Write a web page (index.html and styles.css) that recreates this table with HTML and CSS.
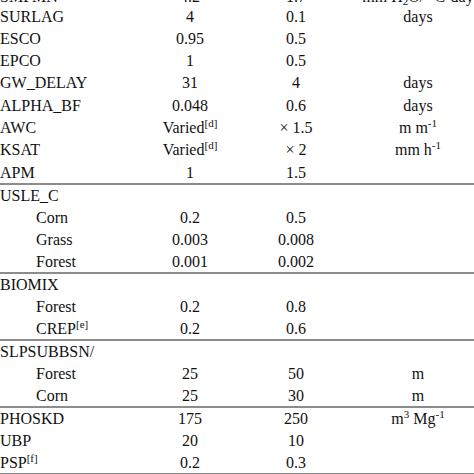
FILE: index.html
```html
<!DOCTYPE html>
<html>
<head>
<meta charset="utf-8">
<link rel="stylesheet" href="styles.css">
</head>
<body>
<div class="table">
  <div class="section first">
    <div class="row cut"><span class="c1">SMFMN</span><span class="c2">4.2</span><span class="c3">1.7</span><span class="c4">mm H<sub>2</sub>O/ °C-day</span></div>
    <div class="row"><span class="c1">SURLAG</span><span class="c2">4</span><span class="c3">0.1</span><span class="c4">days</span></div>
    <div class="row"><span class="c1">ESCO</span><span class="c2">0.95</span><span class="c3">0.5</span><span class="c4"></span></div>
    <div class="row"><span class="c1">EPCO</span><span class="c2">1</span><span class="c3">0.5</span><span class="c4"></span></div>
    <div class="row"><span class="c1">GW_DELAY</span><span class="c2">31</span><span class="c3">4</span><span class="c4">days</span></div>
    <div class="row"><span class="c1">ALPHA_BF</span><span class="c2">0.048</span><span class="c3">0.6</span><span class="c4">days</span></div>
    <div class="row"><span class="c1">AWC</span><span class="c2">Varied<sup>[d]</sup></span><span class="c3">× 1.5</span><span class="c4">m m<sup>-1</sup></span></div>
    <div class="row"><span class="c1">KSAT</span><span class="c2">Varied<sup>[d]</sup></span><span class="c3">× 2</span><span class="c4">mm h<sup>-1</sup></span></div>
    <div class="row"><span class="c1">APM</span><span class="c2">1</span><span class="c3">1.5</span><span class="c4"></span></div>
  </div>
  <div class="rule"></div>
  <div class="section">
    <div class="row"><span class="c1">USLE_C</span><span class="c2"></span><span class="c3"></span><span class="c4"></span></div>
    <div class="row"><span class="c1 sub">Corn</span><span class="c2">0.2</span><span class="c3">0.5</span><span class="c4"></span></div>
    <div class="row"><span class="c1 sub">Grass</span><span class="c2">0.003</span><span class="c3">0.008</span><span class="c4"></span></div>
    <div class="row"><span class="c1 sub">Forest</span><span class="c2">0.001</span><span class="c3">0.002</span><span class="c4"></span></div>
  </div>
  <div class="rule"></div>
  <div class="section">
    <div class="row"><span class="c1">BIOMIX</span><span class="c2"></span><span class="c3"></span><span class="c4"></span></div>
    <div class="row"><span class="c1 sub">Forest</span><span class="c2">0.2</span><span class="c3">0.8</span><span class="c4"></span></div>
    <div class="row"><span class="c1 sub">CREP<sup>[e]</sup></span><span class="c2">0.2</span><span class="c3">0.6</span><span class="c4"></span></div>
  </div>
  <div class="rule"></div>
  <div class="section">
    <div class="row"><span class="c1">SLPSUBBSN/</span><span class="c2"></span><span class="c3"></span><span class="c4"></span></div>
    <div class="row"><span class="c1 sub">Forest</span><span class="c2">25</span><span class="c3">50</span><span class="c4">m</span></div>
    <div class="row"><span class="c1 sub">Corn</span><span class="c2">25</span><span class="c3">30</span><span class="c4">m</span></div>
  </div>
  <div class="rule"></div>
  <div class="section">
    <div class="row"><span class="c1">PHOSKD</span><span class="c2">175</span><span class="c3">250</span><span class="c4">m<sup>3</sup> Mg<sup>-1</sup></span></div>
    <div class="row"><span class="c1">UBP</span><span class="c2">20</span><span class="c3">10</span><span class="c4"></span></div>
    <div class="row"><span class="c1">PSP<sup>[f]</sup></span><span class="c2">0.2</span><span class="c3">0.3</span><span class="c4"></span></div>
  </div>
  <div class="rule"></div>
</div>
</body>
</html>
```

FILE: styles.css
```css
html, body {
  margin: 0;
  padding: 0;
  background: #ffffff;
  overflow: hidden;
  width: 474px;
  height: 474px;
}

.table {
  width: 484px;
  font-family: "Liberation Serif", "Times New Roman", serif;
  font-size: 16px;
  color: #111111;
}

.row {
  display: grid;
  grid-template-columns: 140px 100px 112px 132px;
  height: 22px;
  line-height: 22px;
  white-space: nowrap;
}

.section.first .row {
  height: 22.3px;
}

.section.first .row.cut {
  height: 19.5px;
  margin-top: -14px;
  line-height: 22px;
}

.c1 {
  text-align: left;
}

.c1.sub {
  padding-left: 36px;
}

.c2, .c3, .c4 {
  text-align: center;
}

.rule {
  height: 2px;
  margin-top: -1px;
  background: #8c8c8c;
  width: 474px;
}

sup {
  font-size: 11px;
  line-height: 0;
  vertical-align: 6px;
}

sub {
  font-size: 11px;
  line-height: 0;
  vertical-align: -3px;
}
```
